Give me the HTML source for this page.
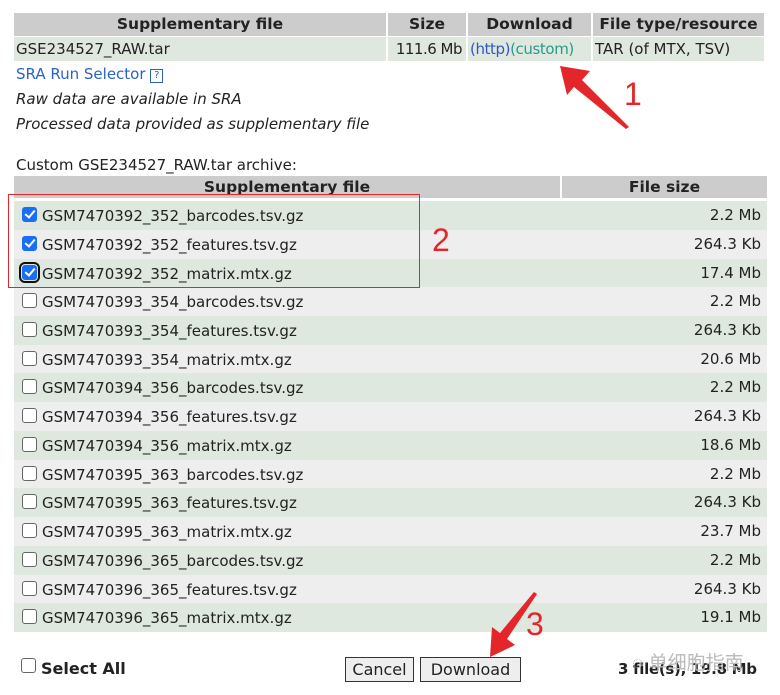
<!DOCTYPE html>
<html><head><meta charset="utf-8"><style>
body{margin:0;width:780px;height:695px;background:#fff;font-family:"DejaVu Sans","Liberation Sans",sans-serif;font-size:15px;color:#222;position:relative;overflow:hidden}
.a{position:absolute;white-space:nowrap}
.h{background:#ccc;font-weight:bold;text-align:center;position:absolute;line-height:23px;font-size:15.5px}
.c{position:absolute;line-height:24px;background:#dfe8de}
.row{position:absolute;left:14px;width:753px;height:29px}
.g{background:#dfe8de}.e{background:#eee}
.cb{position:absolute;left:8px;top:6px;width:13px;height:13px;border:1px solid #666;border-radius:3px;background:#fff}
.ck{background:#1a6ef5;border-color:#1a6ef5}
.ck:after{content:"";position:absolute;left:4px;top:0px;width:4px;height:8px;border:solid #fff;border-width:0 2px 2px 0;transform:rotate(40deg)}
.fn{position:absolute;left:28px;top:6px}
.sz{position:absolute;right:6px;top:5px}
.red{color:#e4262a;font-family:"Liberation Sans",sans-serif;font-size:32px}
.btn{position:absolute;top:657px;height:23px;border:1px solid #333;background:#eee;font-size:16px;line-height:23px;text-align:center}
</style></head><body>
<div class="h" style="left:14px;top:13px;width:372px">Supplementary file</div>
<div class="h" style="left:388px;top:13px;width:78px">Size</div>
<div class="h" style="left:468px;top:13px;width:123px">Download</div>
<div class="h" style="left:593px;top:13px;width:171px">File type/resource</div>
<div class="c" style="left:14px;top:37px;width:372px;padding-left:2px;box-sizing:border-box">GSE234527_RAW.tar</div>
<div class="c" style="left:388px;top:37px;width:78px;text-align:right;padding-right:4px;box-sizing:border-box;letter-spacing:-0.5px">111.6 Mb</div>
<div class="c" style="left:468px;top:37px;width:123px;padding-left:2px;box-sizing:border-box;letter-spacing:-0.4px"><span style="color:#3355cc">(http)</span><span style="color:#2a9a8a">(custom)</span></div>
<div class="c" style="left:593px;top:37px;width:171px;padding-left:2px;box-sizing:border-box">TAR (of MTX, TSV)</div>
<div class="a" style="left:16px;top:65px;color:#2a62c9">SRA Run Selector <span style="display:inline-block;width:11px;height:12px;border:1px solid #2a62c9;font-size:10px;line-height:12px;text-align:center;vertical-align:1px">?</span></div>
<div class="a" style="left:16px;top:90px;font-style:italic">Raw data are available in SRA</div>
<div class="a" style="left:16px;top:115px;font-style:italic">Processed data provided as supplementary file</div>
<div class="a" style="left:16px;top:156px">Custom GSE234527_RAW.tar archive:</div>
<div class="h" style="left:14px;top:176px;width:546px;line-height:22px">Supplementary file</div>
<div class="h" style="left:562px;top:176px;width:205px;line-height:22px">File size</div>
<div class="row g" style="top:201px"><div class="cb ck"></div><div class="fn">GSM7470392_352_barcodes.tsv.gz</div><div class="sz">2.2 Mb</div></div>
<div class="row e" style="top:230px"><div class="cb ck"></div><div class="fn">GSM7470392_352_features.tsv.gz</div><div class="sz">264.3 Kb</div></div>
<div class="row g" style="top:259px"><div class="cb ck" style="outline:2px solid #111;outline-offset:1px"></div><div class="fn">GSM7470392_352_matrix.mtx.gz</div><div class="sz">17.4 Mb</div></div>
<div class="row e" style="top:287px"><div class="cb"></div><div class="fn">GSM7470393_354_barcodes.tsv.gz</div><div class="sz">2.2 Mb</div></div>
<div class="row g" style="top:316px"><div class="cb"></div><div class="fn">GSM7470393_354_features.tsv.gz</div><div class="sz">264.3 Kb</div></div>
<div class="row e" style="top:345px"><div class="cb"></div><div class="fn">GSM7470393_354_matrix.mtx.gz</div><div class="sz">20.6 Mb</div></div>
<div class="row g" style="top:373px"><div class="cb"></div><div class="fn">GSM7470394_356_barcodes.tsv.gz</div><div class="sz">2.2 Mb</div></div>
<div class="row e" style="top:402px"><div class="cb"></div><div class="fn">GSM7470394_356_features.tsv.gz</div><div class="sz">264.3 Kb</div></div>
<div class="row g" style="top:431px"><div class="cb"></div><div class="fn">GSM7470394_356_matrix.mtx.gz</div><div class="sz">18.6 Mb</div></div>
<div class="row e" style="top:460px"><div class="cb"></div><div class="fn">GSM7470395_363_barcodes.tsv.gz</div><div class="sz">2.2 Mb</div></div>
<div class="row g" style="top:488px"><div class="cb"></div><div class="fn">GSM7470395_363_features.tsv.gz</div><div class="sz">264.3 Kb</div></div>
<div class="row e" style="top:517px"><div class="cb"></div><div class="fn">GSM7470395_363_matrix.mtx.gz</div><div class="sz">23.7 Mb</div></div>
<div class="row g" style="top:546px"><div class="cb"></div><div class="fn">GSM7470396_365_barcodes.tsv.gz</div><div class="sz">2.2 Mb</div></div>
<div class="row e" style="top:575px"><div class="cb"></div><div class="fn">GSM7470396_365_features.tsv.gz</div><div class="sz">264.3 Kb</div></div>
<div class="row g" style="top:603px"><div class="cb"></div><div class="fn">GSM7470396_365_matrix.mtx.gz</div><div class="sz">19.1 Mb</div></div>
<div class="a" style="left:8px;top:194px;width:410px;height:92px;border:1px solid #e4262a"></div>
<div class="a red" style="left:432px;top:222px">2</div>
<div class="a red" style="left:624px;top:76px">1</div>
<div class="a red" style="left:526px;top:606px">3</div>
<svg class="a" style="left:0;top:0" width="780" height="695">
<path d="M560 66 L590 71 L582 80 L629 127 L626 129 L574 87 L567 95 Z" fill="#e4262a"/>
<path d="M490 657 L492 627 L500 633 L534 592 L537 594 L507 639 L515 645 Z" fill="#e4262a"/>
</svg>
<div class="cb" style="position:absolute;left:21px;top:658px"></div>
<div class="a" style="left:41px;top:659px;font-weight:bold;font-size:16px">Select All</div>
<div class="btn" style="left:345px;width:67px">Cancel</div>
<div class="btn" style="left:420px;width:99px">Download</div>
<div class="a" style="left:618px;top:660px;font-weight:bold;font-size:15px;letter-spacing:-0.3px">3 file(s), 19.8 Mb</div>
<div class="a" style="left:632px;top:648px;color:#bbb;font-size:19px;font-family:'Liberation Sans','Noto Sans CJK SC',sans-serif">◌ 单细胞指南</div>
</body></html>
